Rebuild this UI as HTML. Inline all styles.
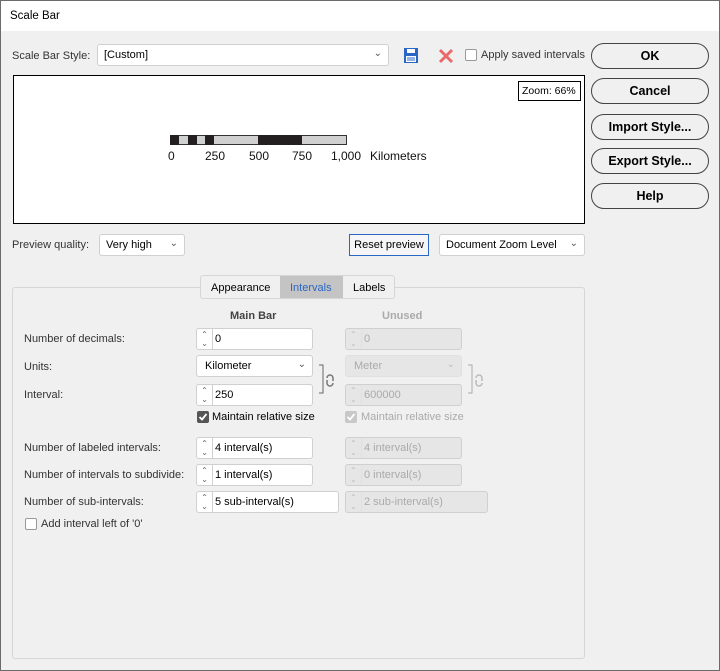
<!DOCTYPE html>
<html><head><meta charset="utf-8"><style>
*{box-sizing:border-box}
body{margin:0;width:720px;height:671px;overflow:hidden;font-family:"Liberation Sans",sans-serif;font-size:11px;color:#000;background:#f0f0f0}
.win{position:absolute;left:0;top:0;width:720px;height:671px;border:1px solid #6b6b6b;background:#f0f0f0}
.title{position:absolute;left:0;top:0;width:718px;height:30px;background:#fff;padding:9px 0 0 9px;font-size:11.5px}
.a{position:absolute;white-space:nowrap}
.inp{position:absolute;background:#fff;border:1px solid #d0d0d0;border-radius:3px;padding:4px 6px;font-size:11px;white-space:nowrap}
.dis{background:#e6e6e6;color:#aaa;border-color:#e0e0e0}
.btn{position:absolute;left:590px;width:118px;height:26px;border:1px solid #444;border-radius:13px;background:#f0f0f0;text-align:center;font-weight:bold;font-size:12.5px;line-height:24px}
.chev{position:absolute;right:6px;top:3px;font-size:10px;color:#555}
.spin{position:absolute;background:#fff;border:1px solid #d0d0d0;border-radius:3px;height:22px}
.spin .s{position:absolute;left:0;top:0;width:16px;height:20px;border-right:1px solid #d0d0d0;font-size:8px;line-height:9px;text-align:center;color:#666;padding-top:1px}
.spin .t{position:absolute;left:18px;top:4px}
.spin.dis{background:#e6e6e6;color:#aaa}
.lbl{position:absolute;left:23px;white-space:nowrap}
.cb{position:absolute;width:12px;height:12px;border-radius:2px}
</style></head><body><div class="win">
<div class="title">Scale Bar</div>
<div class="a" style="left:11px;top:49px;color:#333">Scale Bar Style:</div>
<div class="inp" style="left:96px;top:43px;width:292px;height:22px">[Custom]<span class="chev">&#8964;</span></div>
<svg class="a" style="left:402px;top:46px" width="16" height="17"><rect x="1" y="1" width="14" height="15" fill="#2a66c4"/><rect x="4" y="2" width="8" height="4" fill="#fff"/><rect x="3" y="9" width="10" height="6" fill="#fff"/><line x1="4" y1="11" x2="12" y2="11" stroke="#2a66c4"/><line x1="4" y1="13" x2="12" y2="13" stroke="#2a66c4"/></svg>
<svg class="a" style="left:437px;top:47px" width="16" height="16"><path d="M2 2L14 14M14 2L2 14" stroke="#e86a6a" stroke-width="3"/></svg>
<div class="cb" style="left:464px;top:48px;border:1px solid #999;background:#fff"></div>
<div class="a" style="left:480px;top:48px;color:#333">Apply saved intervals</div>
<div class="btn" style="top:42px">OK</div>
<div class="btn" style="top:77px">Cancel</div>
<div class="btn" style="top:113px">Import Style...</div>
<div class="btn" style="top:147px">Export Style...</div>
<div class="btn" style="top:182px">Help</div>
<div class="a" style="left:12px;top:74px;width:572px;height:149px;background:#fff;border:1px solid #000"></div>
<div class="a" style="left:517px;top:80px;width:63px;height:20px;border:1px solid #000;background:#fff;font-size:10.5px;padding:3px 0 0 3px">Zoom: 66%</div>
<svg class="a" style="left:164px;top:130px" width="280" height="36">
<rect x="5.5" y="4.5" width="176" height="9" fill="#d0d0d0" stroke="#333"/>
<rect x="5" y="4" width="9" height="10" fill="#231f20"/><rect x="23" y="4" width="9" height="10" fill="#231f20"/><rect x="40" y="4" width="9" height="10" fill="#231f20"/><rect x="93" y="4" width="44" height="10" fill="#231f20"/>
<g font-family="Liberation Sans" font-size="12" fill="#111"><text x="3" y="29">0</text><text x="40" y="29">250</text><text x="84" y="29">500</text><text x="127" y="29">750</text><text x="166" y="29">1,000</text><text x="205" y="29">Kilometers</text></g></svg>
<div class="a" style="left:11px;top:238px;color:#333">Preview quality:</div>
<div class="inp" style="left:98px;top:233px;width:86px;height:22px">Very high<span class="chev">&#8964;</span></div>
<div class="a" style="left:348px;top:233px;width:80px;height:22px;border:1px solid #2a66c4;background:#f6f6f6;text-align:center;line-height:20px">Reset preview</div>
<div class="inp" style="left:438px;top:233px;width:146px;height:22px">Document Zoom Level<span class="chev">&#8964;</span></div>
<div class="a" style="left:11px;top:286px;width:573px;height:372px;border:1px solid #d6d6d6;border-radius:3px"></div>
<div class="a" style="left:199px;top:274px;width:195px;height:24px;border:1px solid #d6d6d6;border-radius:3px;background:#f0f0f0"></div>
<div class="a" style="left:210px;top:281px">Appearance</div>
<div class="a" style="left:279px;top:275px;width:63px;height:22px;background:#c4c4c4"></div>
<div class="a" style="left:289px;top:281px;color:#2a66c4">Intervals</div>
<div class="a" style="left:352px;top:281px">Labels</div>
<div class="a" style="left:229px;top:309px;font-weight:bold;color:#444">Main Bar</div>
<div class="a" style="left:381px;top:309px;font-weight:bold;color:#aaa">Unused</div>
<div class="lbl" style="top:332px;color:#333">Number of decimals:</div>
<div class="lbl" style="top:360px;color:#333">Units:</div>
<div class="lbl" style="top:388px;color:#333">Interval:</div>
<div class="lbl" style="top:441px;color:#333">Number of labeled intervals:</div>
<div class="lbl" style="top:468px;color:#333">Number of intervals to subdivide:</div>
<div class="lbl" style="top:495px;color:#333">Number of sub-intervals:</div>
<div class="spin" style="left:195px;top:327px;width:117px"><div class="s">&#8963;<br>&#8964;</div><div class="t">0</div></div>
<div class="inp" style="left:195px;top:354px;width:117px;height:22px;padding-left:8px">Kilometer<span class="chev">&#8964;</span></div>
<div class="spin" style="left:195px;top:383px;width:117px"><div class="s">&#8963;<br>&#8964;</div><div class="t">250</div></div>
<div class="cb" style="left:196px;top:410px;background:#555"><svg width="12" height="12"><path d="M2.5 6L5 8.5L9.5 3" stroke="#fff" stroke-width="1.8" fill="none"/></svg></div>
<div class="a" style="left:211px;top:410px">Maintain relative size</div>
<div class="spin" style="left:195px;top:436px;width:117px"><div class="s">&#8963;<br>&#8964;</div><div class="t">4 interval(s)</div></div>
<div class="spin" style="left:195px;top:463px;width:117px"><div class="s">&#8963;<br>&#8964;</div><div class="t">1 interval(s)</div></div>
<div class="spin" style="left:195px;top:490px;width:143px"><div class="s">&#8963;<br>&#8964;</div><div class="t">5 sub-interval(s)</div></div>
<svg class="a" style="left:316px;top:363px" width="18" height="32"><path d="M2 1H6V29H2" stroke="#666" fill="none"/><path d="M10 14a3 3 0 0 1 6 0v3M16 19a3 3 0 0 1-6 0v-3" stroke="#777" stroke-width="1.5" fill="none"/></svg>
<svg class="a" style="left:465px;top:363px" width="18" height="32"><path d="M2 1H6V29H2" stroke="#aaa" fill="none"/><path d="M10 14a3 3 0 0 1 6 0v3M16 19a3 3 0 0 1-6 0v-3" stroke="#bbb" stroke-width="1.5" fill="none"/></svg>
<div class="spin dis" style="left:344px;top:327px;width:117px"><div class="s" style="color:#bbb;border-color:#e0e0e0">&#8963;<br>&#8964;</div><div class="t">0</div></div>
<div class="inp dis" style="left:344px;top:354px;width:117px;height:22px;padding-left:8px">Meter<span class="chev" style="color:#bbb">&#8964;</span></div>
<div class="spin dis" style="left:344px;top:383px;width:117px"><div class="s" style="color:#bbb;border-color:#e0e0e0">&#8963;<br>&#8964;</div><div class="t">600000</div></div>
<div class="cb" style="left:344px;top:410px;background:#c8c8c8"><svg width="12" height="12"><path d="M2.5 6L5 8.5L9.5 3" stroke="#fff" stroke-width="1.8" fill="none"/></svg></div>
<div class="a" style="left:360px;top:410px;color:#aaa">Maintain relative size</div>
<div class="spin dis" style="left:344px;top:436px;width:117px"><div class="s" style="color:#bbb;border-color:#e0e0e0">&#8963;<br>&#8964;</div><div class="t">4 interval(s)</div></div>
<div class="spin dis" style="left:344px;top:463px;width:117px"><div class="s" style="color:#bbb;border-color:#e0e0e0">&#8963;<br>&#8964;</div><div class="t">0 interval(s)</div></div>
<div class="spin dis" style="left:344px;top:490px;width:143px"><div class="s" style="color:#bbb;border-color:#e0e0e0">&#8963;<br>&#8964;</div><div class="t">2 sub-interval(s)</div></div>
<div class="cb" style="left:24px;top:517px;border:1px solid #999;background:#fff"></div>
<div class="a" style="left:40px;top:517px;color:#333">Add interval left of '0'</div>
</div></body></html>
